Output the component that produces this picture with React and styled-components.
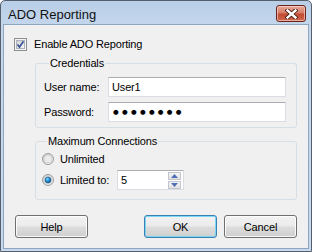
import React from "react";
import styled, { createGlobalStyle } from "styled-components";

const GlobalStyle = createGlobalStyle`
  html, body {
    margin: 0;
    padding: 0;
    background: #ffffff;
  }
  body {
    font-family: "Liberation Sans", Arial, sans-serif;
    font-size: 11px;
    color: #000000;
  }
  * {
    box-sizing: border-box;
  }
`;

const Frame = styled.div`
  width: 312px;
  height: 252px;
  border: 1px solid #56606c;
  border-radius: 5px 5px 0 0;
  background: linear-gradient(#b9cee7, #c3d6ec 24px, #c6d9ee);
  padding: 0 2px 2px 2px;
  display: flex;
  flex-direction: column;
`;

const TitleBar = styled.div`
  height: 23px;
  display: flex;
  align-items: flex-start;
  justify-content: space-between;
  padding: 0 3px 0 5px;
`;

const TitleText = styled.span`
  font-size: 13px;
  letter-spacing: 0;
  line-height: 15px;
  margin-top: 6px;
  color: #111111;
`;

const CloseButton = styled.div`
  width: 30px;
  height: 17px;
  margin-top: 4px;
  border: 1px solid #6a2419;
  border-radius: 3px;
  background: linear-gradient(#e6aa9b, #d77d69 45%, #c24a32 55%, #cf6a4f);
  box-shadow: inset 0 0 0 1px rgba(255, 220, 210, 0.6);
  display: flex;
  align-items: center;
  justify-content: center;
`;

const Client = styled.div`
  flex: 1;
  border: 1px solid #8fa4bd;
  background: #f0f0f0;
  padding: 13px 11px 0 10px;
  display: flex;
  flex-direction: column;
`;

const CheckRow = styled.label`
  display: flex;
  align-items: center;
  gap: 7px;
  height: 13px;
`;

const Text = styled.span`
  font-size: 11px;
  line-height: 13px;
  letter-spacing: -0.15px;
  white-space: nowrap;
`;

const Group = styled.fieldset`
  margin: ${(p) => p.$top}px 0 0 21px;
  padding: ${(p) => p.$pad};
  border: 1px solid #d5dfe5;
  border-radius: 3px;
  min-width: 0;
`;

const Legend = styled.legend`
  padding: 0 1px;
  margin-left: 5px;
  font-size: 11px;
  line-height: 13px;
  letter-spacing: -0.15px;
`;

const FieldRow = styled.div`
  display: flex;
  align-items: center;
  height: 20px;
  & + & {
    margin-top: 5px;
  }
`;

const FieldLabel = styled(Text)`
  width: 64px;
`;

const TextBox = styled.div`
  width: ${(p) => p.$w}px;
  height: 20px;
  background: #ffffff;
  border: 1px solid #dadde3;
  border-top-color: #abadb3;
  display: flex;
  align-items: center;
  padding-left: 3px;
  font-size: 11px;
  letter-spacing: -0.15px;
`;

const Dots = styled.span`
  font-family: "DejaVu Sans", sans-serif;
  font-size: 6.5px;
  letter-spacing: 3.3px;
  line-height: 10px;
  padding-left: 1px;
`;

const RadioRow = styled.div`
  display: flex;
  align-items: center;
  height: ${(p) => p.$h}px;
  gap: 6px;
  & + & {
    margin-top: 3px;
  }
`;

const SpinBox = styled(TextBox)`
  margin-left: 2px;
  justify-content: space-between;
  padding-right: 2px;
`;

const SpinButtons = styled.div`
  display: flex;
  flex-direction: column;
  gap: 1px;
`;

const SpinButton = styled.div`
  width: 13px;
  height: 8px;
  border: 1px solid #c3c6cc;
  background: linear-gradient(#f4f4f4, #e2e2e2);
  display: flex;
  align-items: center;
  justify-content: center;
`;

const ButtonRow = styled.div`
  display: flex;
  align-items: center;
  margin-top: 15px;
  padding-left: 1px;
`;

const Spacer = styled.div`
  flex: 1;
`;

const Button = styled.div`
  width: 73px;
  height: 23px;
  border: 1px solid ${(p) => (p.$default ? "#3c7fb1" : "#707070")};
  border-radius: 3px;
  background: linear-gradient(#f2f2f2, #ebebeb 48%, #dddddd 52%, #cfcfcf);
  box-shadow: inset 0 0 0 1px
    ${(p) => (p.$default ? "rgba(112, 212, 247, 0.9)" : "rgba(255, 255, 255, 0.85)")};
  display: flex;
  align-items: center;
  justify-content: center;
  font-size: 11px;
  letter-spacing: -0.15px;
  & + & {
    margin-left: 7px;
  }
`;

function CloseGlyph() {
  return (
    <svg width="13" height="10" viewBox="0 0 13 10">
      <path d="M2.5 1.5 L10.5 8.5 M10.5 1.5 L2.5 8.5" stroke="#4a1a12" strokeWidth="4.2" strokeLinecap="square" />
      <path d="M2.5 1.5 L10.5 8.5 M10.5 1.5 L2.5 8.5" stroke="#ffffff" strokeWidth="2.4" strokeLinecap="square" />
    </svg>
  );
}

function CheckBox() {
  return (
    <svg width="13" height="13" viewBox="0 0 13 13">
      <defs>
        <linearGradient id="cbFill" x1="0" y1="0" x2="1" y2="1">
          <stop offset="0" stopColor="#cbcfd5" />
          <stop offset="1" stopColor="#f7f7f7" />
        </linearGradient>
      </defs>
      <rect x="0.5" y="0.5" width="12" height="12" fill="#f4f4f4" stroke="#8e8f8f" />
      <rect x="2.5" y="2.5" width="8" height="8" fill="url(#cbFill)" stroke="#aeb3b9" />
      <path d="M3.5 6.5 L5.5 9 L9.5 3.2" fill="none" stroke="#3c5597" strokeWidth="1.7" />
    </svg>
  );
}

function Radio({ checked }) {
  return (
    <svg width="12" height="12" viewBox="0 0 12 12">
      <defs>
        <linearGradient id="rdRing" x1="0" y1="0" x2="1" y2="1">
          <stop offset="0" stopColor="#c9cbcd" />
          <stop offset="1" stopColor="#f6f6f6" />
        </linearGradient>
        <radialGradient id="rdDot" cx="0.4" cy="0.35" r="0.7">
          <stop offset="0" stopColor="#8ae0ff" />
          <stop offset="0.5" stopColor="#1f8bd1" />
          <stop offset="1" stopColor="#0b4a8a" />
        </radialGradient>
      </defs>
      <circle cx="6" cy="6" r="5.5" fill="url(#rdRing)" stroke="#9a9c9e" />
      <circle cx="6" cy="6" r="3.8" fill="#ececec" stroke="#c6c8ca" strokeWidth="0.6" />
      {checked && <circle cx="6" cy="6" r="3" fill="url(#rdDot)" stroke="#174d7e" strokeWidth="0.5" />}
    </svg>
  );
}

function Arrow({ up }) {
  return (
    <svg width="7" height="4" viewBox="0 0 7 4">
      <path d={up ? "M0 4 L3.5 0 L7 4 Z" : "M0 0 L3.5 4 L7 0 Z"} fill="#4d6fb5" />
    </svg>
  );
}

export default function App() {
  return (
    <>
      <GlobalStyle />
      <Frame>
        <TitleBar>
          <TitleText>ADO Reporting</TitleText>
          <CloseButton>
            <CloseGlyph />
          </CloseButton>
        </TitleBar>
        <Client>
          <CheckRow>
            <CheckBox />
            <Text>Enable ADO Reporting</Text>
          </CheckRow>

          <Group $top={6} $pad="7px 7px 5px 8px">
            <Legend>Credentials</Legend>
            <FieldRow>
              <FieldLabel>User name:</FieldLabel>
              <TextBox $w={178}>User1</TextBox>
            </FieldRow>
            <FieldRow>
              <FieldLabel>Password:</FieldLabel>
              <TextBox $w={178}>
                <Dots>●●●●●●●●</Dots>
              </TextBox>
            </FieldRow>
          </Group>

          <Group $top={7} $pad="3px 7px 9px 6px">
            <Legend>Maximum Connections</Legend>
            <RadioRow $h={16}>
              <Radio />
              <Text>Unlimited</Text>
            </RadioRow>
            <RadioRow $h={20}>
              <Radio checked />
              <Text>Limited to:</Text>
              <SpinBox $w={67}>
                <span>5</span>
                <SpinButtons>
                  <SpinButton>
                    <Arrow up />
                  </SpinButton>
                  <SpinButton>
                    <Arrow />
                  </SpinButton>
                </SpinButtons>
              </SpinBox>
            </RadioRow>
          </Group>

          <ButtonRow>
            <Button>Help</Button>
            <Spacer />
            <Button $default>OK</Button>
            <Button>Cancel</Button>
          </ButtonRow>
        </Client>
      </Frame>
    </>
  );
}
